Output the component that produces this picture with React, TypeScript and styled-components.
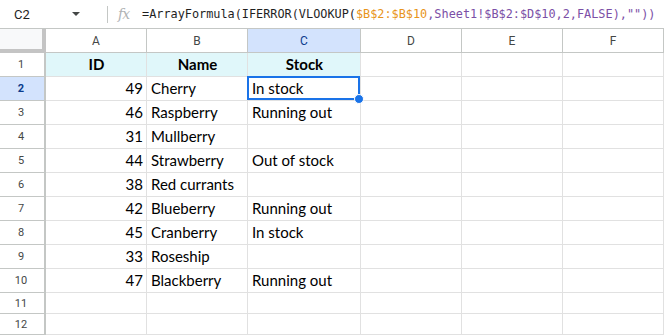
import styled, { createGlobalStyle } from 'styled-components';

const GlobalStyle = createGlobalStyle`
  html, body {
    margin: 0;
    padding: 0;
    background: #ffffff;
  }
  body {
    font-family: Roboto, "Liberation Sans", sans-serif;
    overflow: hidden;
  }
`;

type Row = { id?: number; name?: string; stock?: string; height?: number };

const columns = [
  { letter: 'A', width: 101 },
  { letter: 'B', width: 101 },
  { letter: 'C', width: 113 },
  { letter: 'D', width: 101 },
  { letter: 'E', width: 101 },
  { letter: 'F', width: 101 },
];

const rows: Row[] = [
  { id: 49, name: 'Cherry', stock: 'In stock' },
  { id: 46, name: 'Raspberry', stock: 'Running out' },
  { id: 31, name: 'Mullberry' },
  { id: 44, name: 'Strawberry', stock: 'Out of stock' },
  { id: 38, name: 'Red currants' },
  { id: 42, name: 'Blueberry', stock: 'Running out' },
  { id: 45, name: 'Cranberry', stock: 'In stock' },
  { id: 33, name: 'Roseship' },
  { id: 47, name: 'Blackberry', stock: 'Running out' },
  { height: 21 },
  { height: 21 },
];

const App: React.FC = () => {
  return (
    <Page>
      <GlobalStyle />
      <FormulaBar>
        <NameBox>
          <span>C2</span>
          <Caret />
        </NameBox>
        <Divider />
        <Fx>fx</Fx>
        <Formula>
          =ArrayFormula(IFERROR(VLOOKUP(
          <Range $color="#e8941a">$B$2:$B$10</Range>
          <Range $color="#7b4fa6">,Sheet1!$B$2:$D$10,2,FALSE),""))</Range>
        </Formula>
      </FormulaBar>

      <Sheet>
        <HeaderRow>
          <Corner />
          {columns.map((c) => (
            <ColHead key={c.letter} $w={c.width} $active={c.letter === 'C'}>
              {c.letter}
            </ColHead>
          ))}
        </HeaderRow>

        <GridRow $h={24}>
          <RowHead>1</RowHead>
          <Cell $w={101} $title $align="center">ID</Cell>
          <Cell $w={101} $title $align="center">Name</Cell>
          <Cell $w={113} $title $align="center">Stock</Cell>
          <Cell $w={101} />
          <Cell $w={101} />
          <Cell $w={101} />
        </GridRow>

        {rows.map((r, i) => (
          <GridRow key={i} $h={r.height ?? 24}>
            <RowHead $active={i === 0}>{i + 2}</RowHead>
            <Cell $w={101} $align="right">{r.id}</Cell>
            <Cell $w={101}>{r.name}</Cell>
            <Cell $w={113}>
              {r.stock}
              {i === 0 && (
                <Selection>
                  <Handle />
                </Selection>
              )}
            </Cell>
            <Cell $w={101} />
            <Cell $w={101} />
            <Cell $w={101} />
          </GridRow>
        ))}
      </Sheet>
    </Page>
  );
};
export default App;

const Page = styled.div`
  width: 664px;
  height: 335px;
  overflow: hidden;
  background: #ffffff;
`;

const FormulaBar = styled.div`
  height: 28px;
  border-bottom: 1px solid #c4c7c5;
  display: flex;
  align-items: center;
  box-sizing: content-box;
`;

const NameBox = styled.div`
  width: 94px;
  padding-left: 14px;
  display: flex;
  align-items: center;
  justify-content: space-between;
  padding-right: 12px;
  box-sizing: border-box;
  font-size: 13px;
  color: #1f1f1f;
`;

const Caret = styled.span`
  width: 0;
  height: 0;
  border-left: 4px solid transparent;
  border-right: 4px solid transparent;
  border-top: 4px solid #444746;
  margin-right: 2px;
`;

const Divider = styled.div`
  width: 1px;
  height: 17px;
  background: #c4c7c5;
  margin-left: 13px;
`;

const Fx = styled.div`
  width: 24px;
  margin-left: 10px;
  font-family: "DejaVu Serif", "Liberation Serif", serif;
  font-style: italic;
  font-size: 14px;
  color: #b0b3b5;
  letter-spacing: -1px;
`;

const Formula = styled.div`
  font-family: "DejaVu Sans Mono", "Liberation Mono", monospace;
  font-size: 11.85px;
  color: #1f1f1f;
  white-space: pre;
`;

const Range = styled.span<{ $color: string }>`
  color: ${(p) => p.$color};
`;

const Sheet = styled.div`
  display: flex;
  flex-direction: column;
`;

const HeaderRow = styled.div`
  display: flex;
  height: 24px;
`;

const Corner = styled.div`
  width: 46px;
  height: 24px;
  box-sizing: border-box;
  background: #f8f9fa;
  border-right: 4px solid #c4c4c4;
  border-bottom: 4px solid #c4c4c4;
`;

const ColHead = styled.div<{ $w: number; $active?: boolean }>`
  width: ${(p) => p.$w}px;
  box-sizing: border-box;
  border-right: 1px solid #c4c7c5;
  border-bottom: 1px solid #c4c7c5;
  background: ${(p) => (p.$active ? '#d3e3fd' : '#ffffff')};
  color: ${(p) => (p.$active ? '#0b3c8c' : '#444746')};
  font-size: 12px;
  display: flex;
  align-items: center;
  justify-content: center;
`;

const GridRow = styled.div<{ $h: number }>`
  display: flex;
  height: ${(p) => p.$h}px;
`;

const RowHead = styled.div<{ $active?: boolean }>`
  width: 46px;
  box-sizing: border-box;
  border-right: 2px solid #c4c7c5;
  border-bottom: 1px solid #c4c7c5;
  background: ${(p) => (p.$active ? '#d3e3fd' : '#ffffff')};
  color: ${(p) => (p.$active ? '#0b3c8c' : '#444746')};
  font-weight: ${(p) => (p.$active ? 700 : 400)};
  font-size: 11px;
  display: flex;
  align-items: center;
  justify-content: center;
  padding-right: 2px;
`;

const Cell = styled.div<{ $w: number; $title?: boolean; $align?: 'left' | 'right' | 'center' }>`
  position: relative;
  width: ${(p) => p.$w}px;
  box-sizing: border-box;
  border-right: 1px solid #e1e1e1;
  border-bottom: 1px solid #e1e1e1;
  background: ${(p) => (p.$title ? '#e0f7fa' : '#ffffff')};
  font-family: Lato, "Open Sans", sans-serif;
  font-size: 15px;
  font-weight: ${(p) => (p.$title ? 700 : 400)};
  color: #000000;
  display: flex;
  align-items: flex-end;
  padding: 0 3px 3px 4px;
  justify-content: ${(p) =>
    p.$align === 'right' ? 'flex-end' : p.$align === 'center' ? 'center' : 'flex-start'};
  white-space: nowrap;
`;

const Selection = styled.div`
  position: absolute;
  z-index: 5;
  left: -1px;
  top: -1px;
  right: 0;
  bottom: 0;
  border: 2px solid #1a73e8;
  pointer-events: none;
`;

const Handle = styled.div`
  position: absolute;
  right: -6px;
  bottom: -6px;
  width: 8px;
  height: 8px;
  border-radius: 50%;
  background: #1a73e8;
  border: 1px solid #ffffff;
`;
